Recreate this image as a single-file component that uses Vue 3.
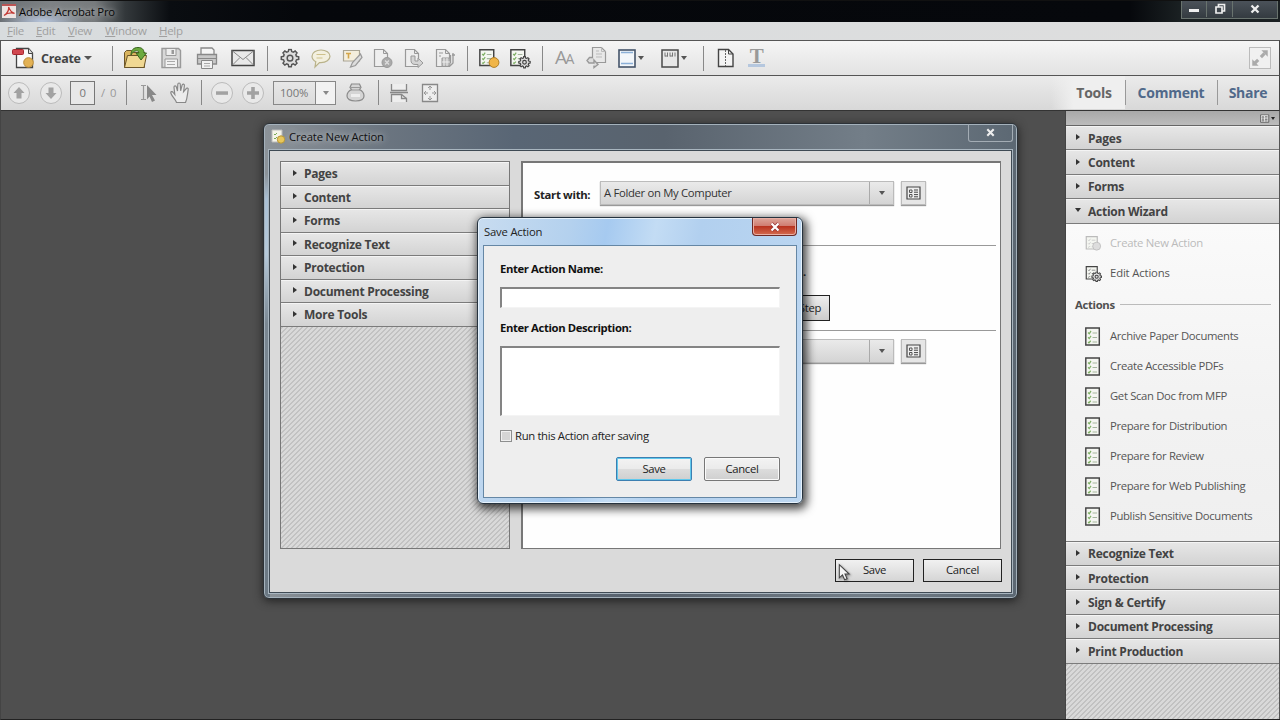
<script setup>
const panelTop = ['Pages', 'Content', 'Forms']
const panelBottom = ['Recognize Text', 'Protection', 'Sign & Certify', 'Document Processing', 'Print Production']
const dialogRows = ['Pages', 'Content', 'Forms', 'Recognize Text', 'Protection', 'Document Processing', 'More Tools']
const actions = [
  'Archive Paper Documents',
  'Create Accessible PDFs',
  'Get Scan Doc from MFP',
  'Prepare for Distribution',
  'Prepare for Review',
  'Prepare for Web Publishing',
  'Publish Sensitive Documents'
]
const menus = [['F', 'ile', 'm1'], ['E', 'dit', 'm2'], ['V', 'iew', 'm3'], ['W', 'indow', 'm4'], ['H', 'elp', 'm5']]
const gear = 'M8.6 0h2.8l.5 2.4 1.7.7L15.700 1.800l2 2-1.300 2.100.7 1.700 2.500.5v2.800l-2.500.5-.7 1.700 1.300 2.100-2 2-2.100-1.300-1.700.7-.5 2.500H8.600l-.5-2.500-1.700-.7-2.100 1.300-2-2 1.300-2.100-.7-1.700L.4 10.900V8.100l2.500-.5.7-1.700L2.300 3.800l2-2 2.100 1.300 1.700-.7z'
</script>

<template>
  <div class="screen">
    <svg class="defs" width="0" height="0">
      <defs>
        <symbol id="gear" viewBox="-1 -1 22 22">
          <path :d="gear" />
          <circle cx="10" cy="9.600" r="3.100" />
        </symbol>
        <symbol id="list" viewBox="0 0 20 20">
          <path d="M2 2h15v17h-15z" fill="#f4f6f1" stroke="currentColor" stroke-width="1.600" />
          <path d="M4.500 6.500l1.300 1.300 2-2.800M4.500 11.300l1.300 1.300 2-2.800M4.500 16l1 .8 2-2" fill="none" stroke="var(--tick, #7fb065)" stroke-width="1.300" />
          <path d="M9.500 7h5M9.500 11.500h5M9.500 16h5" stroke="var(--tick, #a5b59e)" stroke-width="1.200" />
        </symbol>
        <symbol id="form" viewBox="0 0 16 14">
          <path d="M1 1h13v12H1z" fill="#eee" stroke="#444" stroke-width="1.200" />
          <path d="M3.500 4h2.500v2.500H3.500zM3.500 8.500h2.500V11H3.500z" fill="none" stroke="#555" />
          <path d="M8 4h4M8 6.200h4M8 8.600h4M8 10.800h4" stroke="#444" />
        </symbol>
      </defs>
    </svg>

    <header class="titlebar">
      <svg class="logo" viewBox="0 0 14 14">
        <rect width="14" height="14" fill="#eee3e1" />
        <path d="M0 0h14v2H0z" fill="#b55" />
        <path d="M2 11.500C5 9.500 7 6 6.600 3c2 5 4 6 6 6.300C9 8.500 5 9 2 11.500z" fill="none" stroke="#c33a35" stroke-width="1.200" />
      </svg>
      <span>Adobe Acrobat Pro</span>
      <div class="winbtns">
        <i><svg viewBox="0 0 12 12"><path d="M1 6h10v3H1z" fill="#eee" /></svg></i>
        <i><svg viewBox="0 0 12 12"><path d="M2 4h6v6H2zM4.500 4V1.500h6v6.500H8" fill="none" stroke="#eee" stroke-width="1.700" /></svg></i>
        <i><svg viewBox="0 0 12 12"><path d="M2.500 2.500l7 7M9.500 2.500l-7 7" stroke="#eee" stroke-width="2.300" /></svg></i>
      </div>
    </header>

    <nav class="menubar">
      <span v-for="m in menus" :key="m[2]" :class="m[2]"><u>{{ m[0] }}</u>{{ m[1] }}</span>
    </nav>

    <div class="bar bar1">
      <div class="create">
        <svg class="ic" viewBox="0 0 24 24">
          <path d="M5.500 2.500h12l4 4.500v14.500h-16z" fill="#fafafa" stroke="#444" stroke-width="1.300" />
          <path d="M17.500 2.500v5h4" fill="#ddd" stroke="#444" />
          <rect x="1.500" y="3.500" width="11" height="5" rx="1" fill="#d14850" stroke="#a5262e" />
          <circle cx="17.500" cy="16.500" r="4.800" fill="#e3b255" stroke="#b98b37" />
        </svg>
        <b>Create</b><span class="tri"></span>
      </div>
      <i class="sep"></i>
      <div class="group wide">
        <svg class="ic" viewBox="0 0 24 24">
          <path d="M1.500 21.500v-15l2-2h5l2 2h11v15z" fill="#d9b45e" stroke="#6c5629" />
          <path d="M1.500 21.500l3-12h19l-2.500 12z" fill="#f0d893" stroke="#6c5629" />
          <path d="M8 9c0-5 2.500-7.500 7-7.500 4 0 6 2 6 5.500h2.500L18 14l-5-7h2.800c0-1.600-.6-2.200-2.300-2.200C11 4.800 9.500 6.500 8 9z" fill="#6caa3e" stroke="#38651f" />
        </svg>
        <svg class="ic g" viewBox="0 0 24 24">
          <path d="M3 2.500h16.500l2 2v17H3z" fill="#d8d8d8" stroke="#999" stroke-width="1.400" />
          <path d="M7 2.500h10v7H7z" fill="#eee" stroke="#999" /><path d="M12.500 4h2.500v4h-2.500z" fill="#999" />
          <path d="M6 13h12.500v8.500H6z" fill="#f2f2f2" stroke="#999" /><path d="M8 15.500h8M8 18.500h8" stroke="#aaa" />
        </svg>
        <svg class="ic g" viewBox="0 0 24 24">
          <path d="M6 9V2h11l2 2v5" fill="#f5f5f5" stroke="#888" stroke-width="1.300" />
          <path d="M2.500 8.500h19v9.500h-19z" fill="#c8c8c8" stroke="#888" stroke-width="1.300" />
          <path d="M2.500 12.500h19" stroke="#888" /><path d="M6.500 14.500h11v8h-11z" fill="#f2f2f2" stroke="#888" /><path d="M9 17.500h6M9 20h6" stroke="#aaa" />
        </svg>
        <svg class="ic" viewBox="0 0 24 24">
          <path d="M1 4.500h22v15H1z" fill="#e9e9e9" stroke="#444" stroke-width="1.500" />
          <path d="M1.500 5l10.500 8.500L22.500 5M1.500 19l7.500-7.500M22.500 19L15 11.500" fill="none" stroke="#888" />
        </svg>
      </div>
      <i class="sep"></i>
      <div class="group g1">
        <svg class="ic" viewBox="0 0 24 24"><use href="#gear" x="2" y="2.500" width="20" height="20" fill="#ddd" stroke="#555" stroke-width="1.600" /></svg>
        <svg class="ic" viewBox="0 0 24 24">
          <path d="M12 4c5 0 9 2.800 9 6.300s-4 6.300-9 6.300l-1.500 0L6 21l.8-5.300C4.500 14.500 3 12.500 3 10.300 3 6.800 7 4 12 4z" fill="#f3f0df" stroke="#b9b28a" stroke-width="1.200" />
          <path d="M7.500 8.500h9M7.500 12h6" stroke="#cfc28c" stroke-width="1.200" />
        </svg>
        <svg class="ic" viewBox="0 0 24 24">
          <path d="M3.500 4.500h16v10.500h-16z" fill="#f4eedc" stroke="#a9a493" stroke-width="1.200" /><path d="M6 7.500h5M8.500 7.500v5" stroke="#d4a64a" stroke-width="1.600" />
          <path d="M20.500 8l-8 8.500-2 4.500 5-1.500 6.500-8z" fill="#ddd" stroke="#999" stroke-width="1.200" />
        </svg>
        <svg class="ic g" viewBox="0 0 24 24">
          <path d="M3.500 3.500h9l4 4v13h-13z" fill="#eee" stroke="#999" stroke-width="1.200" /><path d="M12.500 3.500v4h4" fill="none" stroke="#999" />
          <circle cx="16" cy="16.500" r="5" fill="#aaa" stroke="#999" /><path d="M14 14.500l4 4M18 14.500l-4 4" stroke="#ddd" stroke-width="1.300" />
        </svg>
        <svg class="ic g" viewBox="0 0 24 24">
          <path d="M3.500 3.500h9l4 4v13h-13z" fill="#eee" stroke="#999" stroke-width="1.200" /><path d="M12.500 3.500v4h4" fill="none" stroke="#999" />
          <path d="M9 10h4v5h3v-3l5 5-5 4.500v-3h-3c-3 0-4-2-4-4z" fill="#d4d4d4" stroke="#999" />
        </svg>
        <svg class="ic g" viewBox="0 0 24 24">
          <path d="M3.500 3.500h9l4 4v13h-13z" fill="#eee" stroke="#999" stroke-width="1.200" /><path d="M12.500 3.500v4h4M6 7h4M6 10h2" fill="none" stroke="#999" />
          <path d="M9 12h8v8H9z" fill="#bbb" stroke="#999" /><path d="M11 12v8M14 12v8M9 16h8" stroke="#eee" /><path d="M20 7v10l-3 3M17.500 9v8M22 9h-3" fill="none" stroke="#999" stroke-width="1.300" />
        </svg>
      </div>
      <i class="sep s2"></i>
      <div class="group g2">
        <svg class="ic dark" viewBox="0 0 24 24"><use href="#list" x="1" y="1.500" width="18.500" height="19.500" /><circle cx="17" cy="16.500" r="4.900" fill="#f0b548" stroke="#b07f25" /></svg>
        <svg class="ic dark" viewBox="0 0 24 24"><use href="#list" x="1" y="1.500" width="18.500" height="19.500" /><use href="#gear" x="10" y="10" width="13" height="13" fill="#ddd" stroke="#444" stroke-width="2" /></svg>
      </div>
      <i class="sep s2"></i>
      <div class="group g3">
        <span class="aa">A<small>A</small></span>
        <svg class="ic g" viewBox="0 0 24 24">
          <path d="M8.500 2.500h9l4 4v11h-13z" fill="#e8e8e8" stroke="#999" stroke-width="1.200" /><path d="M17.500 2.500v4h4M12 6h3M12 9h6M12 12h6" fill="none" stroke="#bbb" />
          <path d="M9 12.500L5.500 12.500 3 15.500l2 2.500h5v-3l4 4.500-4 3v-2" fill="#ddd" stroke="#999" stroke-width="1.400" />
        </svg>
      </div>
      <div class="drop">
        <svg viewBox="0 0 18 19"><rect x="1" y="1" width="16" height="17" fill="#f2f6fa" stroke="#44546a" stroke-width="1.600" /><path d="M3 3.500h12M3 14.500h12" stroke="#8bb0d8" stroke-width="1.300" /></svg>
        <span class="tri"></span>
      </div>
      <div class="drop">
        <svg viewBox="0 0 18 19"><rect x="1" y="1" width="16" height="17" fill="#e8e8e8" stroke="#4a4a4a" stroke-width="1.500" /><path d="M4 3.500v4M6.500 3.500v4M9 3.500v4M11.500 3.500v4M14 3.500v4M4 7h3M9 7h2.500" stroke="#777" /></svg>
        <span class="tri"></span>
      </div>
      <i class="sep"></i>
      <div class="group g4">
        <svg class="ic" viewBox="0 0 24 24"><path d="M4.500 3.500h10l4.500 4.500v12.500H4.500z" fill="#f4f4f4" stroke="#444" stroke-width="1.400" /><path d="M14.500 3.500v4.500H19" fill="none" stroke="#444" /><path d="M11.500 4v16" stroke="#666" stroke-dasharray="2 1" /></svg>
        <span class="tee">T</span>
      </div>
      <div class="expand">
        <svg viewBox="0 0 22 22"><path d="M12 10l4-4" stroke="#aaa" stroke-width="3.500" /><path d="M12.500 2.500h7V9.500zM2.500 12.500v7h7z" fill="#aaa" /><path d="M5 17l4-4" stroke="#aaa" stroke-width="3.500" /></svg>
      </div>
    </div>

    <div class="bar bar2">
      <svg class="ic g" viewBox="0 0 24 24"><circle cx="12" cy="12" r="10.500" fill="#e9e9e9" stroke="#bbb" /><path d="M12 6l5.500 6h-3v5.500h-5V12h-3z" fill="#a2a2a2" /></svg>
      <svg class="ic g" viewBox="0 0 24 24"><circle cx="12" cy="12" r="10.500" fill="#e9e9e9" stroke="#bbb" /><path d="M12 18l5.500-6h-3V6.500h-5V12h-3z" fill="#a2a2a2" /></svg>
      <div class="pageno">0</div>
      <span class="of">/&nbsp; 0</span>
      <i class="sep"></i>
      <div class="group">
        <svg class="ic" viewBox="0 0 24 24"><path d="M4 4.500h5M6.500 4.500v14M4 18.500h5" stroke="#999" stroke-width="1.200" fill="none" /><path d="M10 4l9.500 10h-4.500l3 5.500-3 1.500-2.500-5.500-2.500 3z" fill="#888" /></svg>
        <svg class="ic" viewBox="0 0 24 24"><path d="M8.500 21.500C7.500 18 4.500 16.500 3 12.500c-.8-2 1.300-2.500 2.200-1l1.600 2L6 6.500c-.2-2 2-2.300 2.400-.4L9.500 10l.3-6.500c.1-2 2.400-2 2.500 0l.3 6.300 1.500-5.600c.5-1.900 2.500-1.300 2.300.5l-.8 6L18 8c.8-1.700 2.500-1 2.200.7-.8 4.300-.7 8.300-2.700 12.800z" fill="#ececec" stroke="#888" stroke-width="1.200" /></svg>
      </div>
      <i class="sep"></i>
      <div class="group">
        <svg class="ic" viewBox="0 0 24 24"><circle cx="12" cy="12" r="10.500" fill="#e9e9e9" stroke="#bbb" /><path d="M6 10.300h12v3.500H6z" fill="#a2a2a2" /></svg>
        <svg class="ic" viewBox="0 0 24 24"><circle cx="12" cy="12" r="10.500" fill="#e9e9e9" stroke="#bbb" /><path d="M6 10.300h4.200V6h3.600v4.300H18v3.500h-4.200V18h-3.600v-4.200H6z" fill="#a2a2a2" /></svg>
      </div>
      <div class="zoom"><span>100%</span><i><b class="tri"></b></i></div>
      <svg class="ic" viewBox="0 0 24 24"><path d="M8.500 3h8l1.500 3.500-1.500 2c3 1.500 4.500 4 4.500 6.500 0 3-3 5-8.500 5S4 18 4 15c0-2.500 1.500-5 4.500-6.500L7 6.500z" fill="#d5d5d5" stroke="#8a8a8a" stroke-width="1.200" /><path d="M7 6.500h11M8 9h9" fill="none" stroke="#999" /><path d="M8 13h9v3H8z" fill="#eee" /></svg>
      <i class="sep s3"></i>
      <div class="group g5">
        <svg class="ic" viewBox="0 0 24 24"><path d="M4.500 3v6.500h15V3M4.500 21v-7.500h10l5 4V21" fill="#eee" stroke="#888" stroke-width="1.300" /><path d="M3 11.500h18M14.500 13.500v4h5" stroke="#888" fill="none" stroke-width="1.300" /></svg>
        <svg class="ic" viewBox="0 0 24 24"><path d="M4.500 3.500h15v17h-15z" fill="#eee" stroke="#888" stroke-width="1.300" /><path d="M12 5v4M10 7l2-2 2 2M12 19v-4M10 17l2 2 2-2M6 12h4M8 10l-2 2 2 2M18 12h-4M16 10l2 2-2 2" fill="none" stroke="#999" /></svg>
      </div>
      <div class="tabs"><b class="t1">Tools</b><b class="t2">Comment</b><b class="t3">Share</b></div>
    </div>

    <main class="work">
      <aside class="panel">
        <div class="phead"><svg class="pform" viewBox="0 0 16 14"><use href="#form" /></svg><span class="tri"></span></div>
        <div v-for="r in panelTop" :key="r" class="row"><span class="arr"></span>{{ r }}</div>
        <div class="row"><span class="arr down"></span>Action Wizard</div>
        <div class="pbody">
          <div class="item off"><svg class="pi" viewBox="0 0 24 24"><use href="#list" x="1" y="1.500" width="18.500" height="19.500" /><circle cx="16" cy="16" r="5" fill="#ddd" stroke="#bbb" /></svg>Create New Action</div>
          <div class="item edit"><svg class="pi" viewBox="0 0 24 24"><use href="#list" x="1" y="1.500" width="18.500" height="19.500" /><use href="#gear" x="9" y="10" width="14" height="14" fill="#ddd" stroke="#444" stroke-width="2" /></svg>Edit Actions</div>
          <div class="ahead"><b>Actions</b><i></i></div>
          <div v-for="a in actions" :key="a" class="item act"><svg class="pl" viewBox="0 0 20 20" preserveAspectRatio="none"><use href="#list" /></svg>{{ a }}</div>
        </div>
        <div v-for="r in panelBottom" :key="r" class="row"><span class="arr"></span>{{ r }}</div>
        <div class="hatch"></div>
      </aside>
    </main>

    <section class="dlg">
      <div class="dtitle">
        <svg class="dico" viewBox="0 0 14 15"><path d="M1 1h10v12H1z" fill="#f4f4e8" stroke="#bbb" /><path d="M3 5l1 1 2-2M3 9l1 1 2-2" fill="none" stroke="#7a5" /><circle cx="10" cy="10.500" r="3.700" fill="#e8c75b" stroke="#b69638" /></svg>
        <span>Create New Action</span>
        <i class="dx"><svg viewBox="0 0 12 12"><path d="M2.500 2.500l7 7M9.500 2.500l-7 7" stroke="#eee" stroke-width="2.300" /></svg></i>
      </div>
      <div class="dclient">
        <div class="cols">
          <div class="lcol">
            <div v-for="r in dialogRows" :key="r" class="row drow"><span class="arr"></span>{{ r }}</div>
            <div class="hatch"></div>
          </div>
          <div class="rcol">
            <div class="line1"><b>Start with:</b><div class="select"><span>A Folder on My Computer</span><i><em class="tri"></em></i></div><div class="sq"><svg viewBox="0 0 16 14"><use href="#form" /></svg></div></div>
            <div class="rule"></div>
            <div class="steps"><div class="dot">.</div><div class="stepbtn">Step</div></div>
            <div class="rule"></div>
            <div class="line2"><div class="select"><i><em class="tri"></em></i></div><div class="sq"><svg viewBox="0 0 16 14"><use href="#form" /></svg></div></div>
          </div>
        </div>
        <div class="dfoot"><div class="fb">Save</div><div class="fb">Cancel</div></div>
      </div>
    </section>

    <section class="save">
      <div class="stitle"><span>Save Action</span></div>
      <i class="sx"><svg viewBox="0 0 12 12"><path d="M2.500 2.500l7 7M9.500 2.500l-7 7" stroke="#933" stroke-width="3.600" /><path d="M2.500 2.500l7 7M9.500 2.500l-7 7" stroke="#fff" stroke-width="2.200" /></svg></i>
      <div class="sclient">
        <b class="l1">Enter Action Name:</b>
        <div class="input"></div>
        <b class="l2">Enter Action Description:</b>
        <div class="input area"></div>
        <div class="check"><i></i>Run this Action after saving</div>
        <div class="sfoot"><div class="sb primary">Save</div><div class="sb">Cancel</div></div>
      </div>
    </section>

    <svg class="cursor" viewBox="0 0 16 22"><path d="M1.500 1.500v15l3.600-3.300 2.500 5.600 2.800-1.200L8 12.200h4.800z" fill="#f4f4f4" stroke="#444" stroke-width="1.200" /></svg>
  </div>
</template>

<style>
body { background: #4f4f4f; overflow: hidden; }
</style>

<style scoped>
* { box-sizing: border-box; }
i, em { font-style: normal; }
svg { display: block; flex: none; }
.defs { position: absolute; }
.screen { position: relative; width: 1280px; height: 720px; overflow: hidden; display: flex; flex-direction: column; font-family: "Open Sans", "Noto Sans", sans-serif; font-size: 11.300px; letter-spacing: -.32px; color: #333; background: #4f4f4f; white-space: nowrap; }
.titlebar { height: 22px; flex: none; display: flex; align-items: center; background: radial-gradient(ellipse 42px 12px at 42px 20px, #c3d4f0cc, transparent), linear-gradient(90deg, #6a6f73 0, #7e8285 50px, #777b7d 95px, #33383b 125px, #0a0d11 170px, #05070b 300px, #06080c 1130px, #1a2022 1180px); border-top: 1px solid #111; color: #080808; padding: 0 0 1px 2px; }
.logo { width: 14px; height: 14px; margin-right: 3px; }
.titlebar span { text-shadow: 0 0 5px #ccc; letter-spacing: -.2px; }
.winbtns { margin-left: auto; margin-right: 2px; display: flex; align-self: flex-start; border: 1px solid #69736e; border-top: 0; background: linear-gradient(#4b525a, #343b40); height: 18px; }
.winbtns i { width: 26px; height: 16px; display: grid; place-items: center; border-right: 1px solid #69736e; }
.winbtns i:first-child { width: 25px; }
.winbtns i:last-child { width: 44px; border: 0; }
.winbtns svg { width: 12px; height: 12px; }
.menubar { height: 18px; flex: none; display: flex; align-items: center; background: linear-gradient(90deg, #d8dcde, #dedede); color: #a0a0a0; font-size: 11.500px; padding: 0 0 2px 7px; }
.m1 { width: 29px; } .m2 { width: 32px; } .m3 { width: 37px; } .m4 { width: 54px; }
.bar { flex: none; display: flex; align-items: center; border-left: 1px solid #555; border-right: 1px solid #444; border-top: 1px solid #555; }
.bar1 { height: 35px; background: linear-gradient(#f5f5f5, #e3e3e3); }
.bar2 { height: 36px; background: linear-gradient(#ebebeb, #d8d8d8); border-bottom: 1px solid #333; padding-left: 6px; padding-bottom: 1px; }
.ic { width: 24px; height: 24px; }
.dark { color: #444; }
.create { width: 100px; display: flex; align-items: center; padding-left: 10px; }
.create b { font-size: 12.500px; margin-left: 6px; width: 43px; letter-spacing: -.3px; color: #444; }
.create .tri { border-width: 4px; border-bottom: 0; }
.tri { display: inline-block; width: 0; height: 0; border: 3.500px solid transparent; border-top: 4.500px solid #555; border-bottom: 0; }
.sep { width: 1px; height: 25px; background: #888; margin: 0 11px; flex: none; }
.create + .sep { margin-right: 10px; }
.group { display: flex; gap: 7px; }
.wide { gap: 12px; }
.bar1 .wide + .sep { margin: 0 10px 0 12px; }
.bar1 .s2 { margin-left: 10px; }
.bar1 .g2 { margin-left: -2px; }
.g3 { margin-left: -1px; }
.aa { width: 24px; font-size: 19px; line-height: 24px; color: #999; letter-spacing: -1.500px; padding-left: 2px; }
.aa small { font-size: 14px; }
.drop { display: flex; align-items: center; width: 43px; padding-left: 10px; }
.drop svg { width: 18px; height: 19px; margin-right: 2px; }
.drop + .sep { margin-left: 9px; margin-right: 10px; }
.tee { width: 17px; height: 19px; margin: 2px 0 0 3px; text-align: center; font: bold 21px/17px "Liberation Serif", serif; color: #999; border-bottom: 3px solid #b5c7de; }
.expand { width: 22px; height: 22px; margin-left: auto; margin-right: 8px; border: 1px solid #bbb; background: #f0f0f0; }
.expand svg { width: 20px; height: 20px; }
.bar2 > .ic + .ic { margin-left: 8px; }
.pageno { margin-left: 7px; width: 25px; height: 24px; border: 1px solid #777; text-align: center; line-height: 22px; color: #777; background: #e8e8e8; }
.of { width: 25px; padding-left: 6px; color: #999; }
.bar2 .sep { margin: 0 10px 0 6px; }
.bar2 .group + .sep { margin-left: 9px; margin-right: 8px; }
.zoom { display: flex; width: 63px; height: 24px; border: 1px solid #888; margin: 0 7px 0 8px; color: #777; }
.zoom span { flex: 1; line-height: 22px; padding-left: 6px; letter-spacing: -.1px; }
.zoom i { width: 20px; border-left: 1px solid #888; display: grid; place-items: center; background: #f2f2f2; }
.zoom .tri { border-top-color: #888; }
.bar2 .s3 { margin: 0 8px 0 11px; }
.tabs { margin-left: auto; display: flex; font-size: 14px; height: 33px; line-height: 33px; color: #50698a; letter-spacing: -.25px; }
.tabs b { text-align: center; align-self: stretch; }
.t1 { width: 74px; color: #666; background: linear-gradient(90deg, transparent, #efefef 30%); padding-left: 12px; }
.t2 { width: 92px; } .t3 { width: 62px; }
.t2, .t3 { background: linear-gradient(#999, #999) 0 4px / 1px 25px no-repeat; }
.work { flex: 1; display: flex; min-height: 0; border-bottom: 1px solid #222; border-left: 1px solid #444; }
.panel { margin-left: auto; width: 215px; display: flex; flex-direction: column; border-left: 1px solid #444; border-right: 1px solid #555; background: #f2f2f2; }
.phead { height: 15px; flex: none; background: linear-gradient(#a8a8a8, #bcbcbc); border-bottom: 1px solid #666; display: flex; align-items: center; justify-content: flex-end; padding-right: 4px; gap: 1px; }
.pform { width: 10px; height: 9px; }
.phead .tri { border-width: 2.500px; border-top: 3px solid #222; border-bottom: 0; }
.row { height: 24.400px; flex: none; display: flex; align-items: center; border-bottom: 1px solid #7b7b7b; border-top: 1px solid #f4f4f4; background: linear-gradient(#e6e6e6, #d3d3d3); font-weight: 700; font-size: 12px; letter-spacing: -.25px; color: #434343; padding-left: 10px; }
.arr { width: 12px; height: 7px; margin-top: -1px; flex: none; }
.arr::before { content: ""; display: block; width: 0; height: 0; border: 3.500px solid transparent; border-left: 4.500px solid #333; border-right: 0; }
.arr.down::before { border: 3.500px solid transparent; border-top: 4.500px solid #333; border-bottom: 0; margin-left: -1px; margin-top: 1px; }
.pbody { height: 318px; flex: none; border-bottom: 1px solid #7b7b7b; padding-top: 4px; background: linear-gradient(#fafafa, #f2f2f2 60%, #efefef); }
.item { height: 30px; display: flex; align-items: center; padding-left: 18px; color: #555; letter-spacing: -.34px; }
.item svg { margin-right: 8px; color: #444; }
.pi { width: 19px; height: 20px; }
.item .pi { margin-right: 7px; }
.item.off { color: #bbb; --tick: #ccc; letter-spacing: -.26px; }
.off svg.pi { color: #bbb; }
.edit { --tick: #888; letter-spacing: -.15px; }
.pl { width: 18px; height: 20px; }
.ahead { display: flex; align-items: center; height: 33px; padding: 0 8px 0 9px; color: #505050; }
.ahead i { flex: 1; height: 1px; background: #bbb; margin-left: 5px; }
.hatch { flex: 1; background: repeating-linear-gradient(135deg, #c2c2c2 0 1.700px, #d9d9d9 1.700px 3.540px); }
.dlg { position: absolute; left: 263px; top: 123px; width: 755px; height: 476px; border: 1px solid #2c3238; border-radius: 6px; background: linear-gradient(transparent 50px, #a9bfd4 75px, #b6cadb 130px, #7a8792 200px, #6b7883) 0 0 / 6px 100% no-repeat, linear-gradient(90deg, #8c9399, #6b7580 120px, #596675 250px, #59636e 400px, #737e88 600px, #5c6873); box-shadow: inset 0 0 0 1px #a4b1bb, 0 2px 10px #222; padding: 0 5px 5px 5px; display: flex; flex-direction: column; }
.dtitle { height: 26px; flex: none; display: flex; align-items: center; color: #101010; padding-bottom: 2px; letter-spacing: -.15px; }
.dtitle span { text-shadow: 0 0 6px #ddd; }
.dico { width: 14px; height: 15px; margin: 0 4px 0 2px; }
.dx { margin-left: auto; margin-right: -1px; align-self: flex-start; width: 45px; height: 18px; border: 1px solid #a3acb4; border-top: 0; display: grid; place-items: center; border-radius: 0 0 3px 3px; }
.dx svg { width: 11px; height: 11px; }
.dclient { flex: 1; border: 1px solid #3f4a54; outline: 1px solid #a8b5bf; background: #dadada; padding: 10px 10px 0 10px; display: flex; flex-direction: column; }
.cols { height: 388px; display: flex; gap: 11px; }
.lcol { width: 230px; border: 1px solid #777; display: flex; flex-direction: column; }
.drow { height: 23.500px; padding-left: 12px; }
.drow .arr { width: 11px; }
.rcol { flex: 1; border: 1px solid #777; border-top: 2px solid #777; border-left: 2px solid #777; background: #fefefe; padding-right: 4px; }
.line1 { display: flex; height: 82px; padding: 18px 0 0 11px; }
.line1 b { width: 66px; line-height: 28px; color: #222; letter-spacing: -.3px; }
.select { width: 294px; height: 24px; border: 1px solid #bbb; box-shadow: 0 1px 1px #999; background: linear-gradient(#eaeaea, #d4d4d4); display: flex; line-height: 22px; padding-left: 3px; color: #333; }
.select i { margin-left: auto; width: 24px; border-left: 1px solid #aaa; display: grid; place-items: center; }
.sq { width: 25px; height: 24px; margin-left: 7px; border: 1px solid #bbb; box-shadow: 0 1px 1px #999; background: #e6e6e6; display: grid; place-items: center; }
.sq svg { width: 16px; height: 14px; }
.rule { height: 1px; background: #999; }
.steps { height: 84px; padding: 18px 166px 0 0; display: flex; flex-direction: column; align-items: flex-end; }
.dot { height: 31px; width: 27px; font-weight: bold; }
.stepbtn { width: 60px; height: 26px; border: 1px solid #222; background: linear-gradient(#eee, #ccc); text-align: right; padding-right: 8px; line-height: 23px; color: #222; }
.line2 { display: flex; padding: 8px 0 0 77px; }
.dfoot { display: flex; justify-content: flex-end; gap: 9px; padding-top: 10px; margin-right: -1px; }
.fb { width: 79px; height: 23px; border: 1px solid #222; background: linear-gradient(#f1f1f1, #d5d5d5); text-align: center; line-height: 19px; color: #222; }
.save { position: absolute; left: 477px; top: 217px; width: 326px; height: 287px; border: 1px solid #26333f; border-radius: 6px; background: linear-gradient(100deg, #c8dcf0, #b4d1ee 25%, #a6caf0 35%, #c3dcf4 48%, #b2d0ef 60%, #bdd7f1); box-shadow: inset 0 0 0 1px #e6f2fc, 2px 3px 10px 2px #000b; padding: 0 5px 5px; display: flex; flex-direction: column; }
.stitle { height: 27px; flex: none; line-height: 27px; padding-left: 1px; color: #222; letter-spacing: -.2px; }
.sx { position: absolute; right: 5px; top: 0; width: 45px; height: 18px; border: 1px solid #6e2a26; border-top: 0; border-radius: 0 0 4px 4px; background: linear-gradient(#dda69b, #d07e72 45%, #b93420 50%, #d46c50); display: grid; place-items: center; box-shadow: inset 0 0 0 1px #e9b0a5; }
.sx svg { width: 12px; height: 12px; }
.sclient { flex: 1; border: 1px solid #6587a5; background: #eee; padding: 0 16px; display: flex; flex-direction: column; color: #222; }
.sclient b { color: #111; letter-spacing: -.38px; }
.l1 { height: 41px; line-height: 46px; }
.input { height: 21px; background: #fff; border: 2px solid #848484; border-right-color: #f4f4f4; border-bottom-color: #f4f4f4; border-right-width: 1px; border-bottom-width: 1px; }
.l2 { height: 38px; line-height: 40px; }
.area { height: 70px; }
.check { display: flex; align-items: center; height: 39px; letter-spacing: -.34px; }
.check i { width: 12px; height: 12px; border: 1px solid #8e8f8f; box-shadow: inset 0 0 0 1px #f0f0f0; background: #d5d5d5; margin-right: 3px; }
.sfoot { display: flex; justify-content: flex-end; gap: 12px; margin-top: 2px; }
.sb { width: 76px; height: 24px; border: 1px solid #777; border-radius: 2px; background: linear-gradient(#f3f3f3, #ebebeb 48%, #dcdcdc 52%, #cfcfcf); text-align: center; line-height: 21px; box-shadow: inset 0 0 0 1px #fafafa; }
.primary { border-color: #3c7fb1; box-shadow: inset 0 0 0 1px #60c8ec; }
.cursor { position: absolute; left: 838px; top: 563px; width: 14px; height: 20px; filter: drop-shadow(1px 1px 1px #0006); }
</style>
